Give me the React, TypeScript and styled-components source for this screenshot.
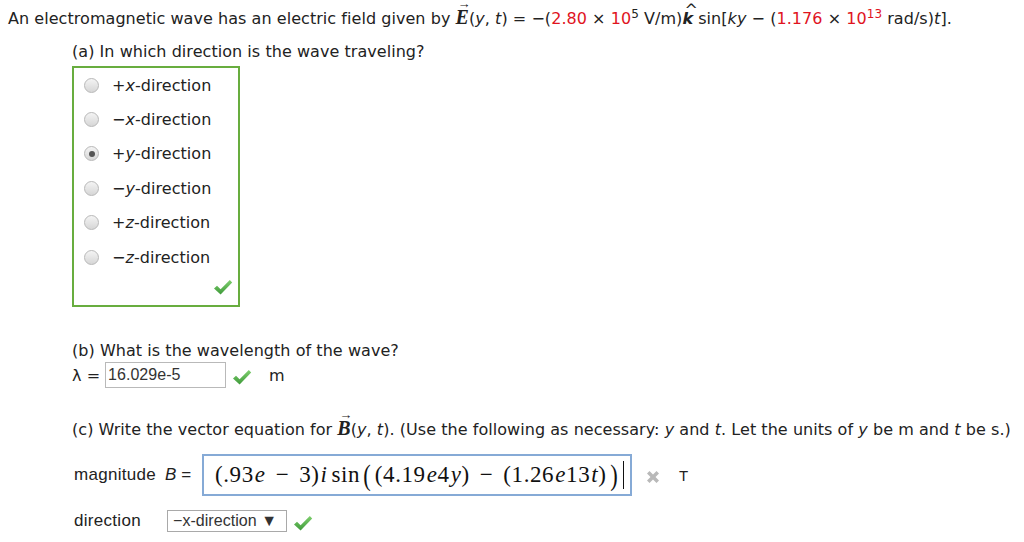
import React from "react";
import styled, { createGlobalStyle } from "styled-components";

const GlobalStyle = createGlobalStyle`
  body {
    margin: 0;
    background: #ffffff;
    color: #222222;
    font-family: "DejaVu Sans", Verdana, sans-serif;
  }
`;

const options = [
  { sign: "+", axis: "x" },
  { sign: "\u2212", axis: "x" },
  { sign: "+", axis: "y", checked: true },
  { sign: "\u2212", axis: "y" },
  { sign: "+", axis: "z" },
  { sign: "\u2212", axis: "z" },
];

const CheckMark = () => (
  <svg width="20" height="17" viewBox="0 0 20 17">
    <defs>
      <linearGradient id="ck" x1="0" y1="0" x2="0" y2="1">
        <stop offset="0" stopColor="#7fcf6e" />
        <stop offset="1" stopColor="#3e9a3a" />
      </linearGradient>
    </defs>
    <path
      d="M1 9.5 L4 6.8 L7.6 10.2 L16.8 1 L19.2 3.4 L7.6 15.6 Z"
      fill="url(#ck)"
    />
  </svg>
);

const CrossMark = () => (
  <svg width="16" height="16" viewBox="0 0 16 16">
    <path
      d="M2 4.5 L4.5 2 L8 5.5 L11.5 2 L14 4.5 L10.5 8 L14 11.5 L11.5 14 L8 10.5 L4.5 14 L2 11.5 L5.5 8 Z"
      fill="#b9b9b9"
    />
  </svg>
);

const App = () => {
  return (
    <>
      <GlobalStyle />
      <Page>
        <Question>
          An electromagnetic wave has an electric field given by{" "}
          <Vec>E</Vec>(<I>y</I>, <I>t</I>) = −(<Red>2.80</Red> × <Red>10</Red>
          <Sup>5</Sup> V/m)<Hat>k</Hat> sin[<I>ky</I> − (<Red>1.176</Red> ×{" "}
          <Red>10</Red>
          <Sup>
            <Red>13</Red>
          </Sup>{" "}
          rad/s)<I>t</I>].
        </Question>

        <Part>
          <PartLabel>(a) In which direction is the wave traveling?</PartLabel>
          <ChoiceBox>
            {options.map((o, i) => (
              <Choice key={i}>
                <Radio checked={!!o.checked} />
                <span>
                  {o.sign}
                  <I>{o.axis}</I>-direction
                </span>
              </Choice>
            ))}
            <BoxCheck>
              <CheckMark />
            </BoxCheck>
          </ChoiceBox>
        </Part>

        <Part $top={34}>
          <PartLabel>(b) What is the wavelength of the wave?</PartLabel>
          <AnswerRow>
            <Symbol>λ =</Symbol>
            <TextField>16.029e-5</TextField>
            <Mark>
              <CheckMark />
            </Mark>
            <Unit>m</Unit>
          </AnswerRow>
        </Part>

        <Part $top={29}>
          <PartLabel>
            (c) Write the vector equation for <Vec>B</Vec>(<I>y</I>, <I>t</I>).
            (Use the following as necessary: <I>y</I> and <I>t</I>. Let the
            units of <I>y</I> be m and <I>t</I> be s.)
          </PartLabel>
          <FormRow>
            <FieldLabel $w={87}>magnitude</FieldLabel>
            <SymbolSans>
              <i>B</i> =
            </SymbolSans>
            <MathBox>
              (.93<MI>e</MI>
              <Op>−</Op>3)<MI>i</MI>
              <Fn>sin</Fn>
              <Big>(</Big>(4.19<MI>e</MI>4<MI>y</MI>)<Op>−</Op>(1.26<MI>e</MI>13
              <MI>t</MI>)<Big>)</Big>
              <Caret />
            </MathBox>
            <CrossWrap>
              <CrossMark />
            </CrossWrap>
            <UnitSans>T</UnitSans>
          </FormRow>
          <DirectionRow>
            <FieldLabel $w={93}>direction</FieldLabel>
            <Select>−x-direction ▼</Select>
            <Mark>
              <CheckMark />
            </Mark>
          </DirectionRow>
        </Part>
      </Page>
    </>
  );
};

const Page = styled.div`
  padding: 6px 0 0 8px;
  font-size: 16px;
  letter-spacing: 0.05px;
`;

const Question = styled.div`
  line-height: 22px;
  white-space: nowrap;
`;

const I = styled.i`
  font-style: italic;
`;

const Red = styled.span`
  color: #e0141e;
`;

const Sup = styled.sup`
  font-size: 12px;
  vertical-align: 6px;
  line-height: 0;
`;

const Vec = styled.span`
  position: relative;
  display: inline-block;
  font-family: "Liberation Serif", serif;
  font-style: italic;
  font-weight: bold;
  font-size: 20px;
  &::before {
    content: "→";
    position: absolute;
    left: 2px;
    top: -13px;
    font-size: 13px;
    font-style: normal;
    font-weight: normal;
  }
`;

const Hat = styled.span`
  position: relative;
  display: inline-block;
  font-style: italic;
  font-weight: bold;
  &::before {
    content: "^";
    position: absolute;
    left: 2px;
    top: -9px;
    font-style: normal;
    font-weight: normal;
  }
`;

const Part = styled.div<{ $top?: number }>`
  margin: ${(p) => p.$top ?? 12}px 0 0 64px;
`;

const PartLabel = styled.div`
  line-height: 20px;
  white-space: nowrap;
`;

const ChoiceBox = styled.div`
  position: relative;
  box-sizing: border-box;
  width: 168px;
  height: 241px;
  margin-top: 4px;
  padding: 0 0 0 10px;
  border: 2px solid #68ad3f;
`;

const Choice = styled.div`
  display: flex;
  align-items: center;
  gap: 13px;
  height: 34.4px;
`;

const Radio = styled.span<{ checked: boolean }>`
  position: relative;
  box-sizing: border-box;
  width: 15px;
  height: 15px;
  border-radius: 50%;
  border: 1px solid #b8b8b8;
  background: linear-gradient(#f4f4f4, #d6d6d6);
  &::after {
    content: "";
    display: ${(p) => (p.checked ? "block" : "none")};
    position: absolute;
    left: 3.5px;
    top: 3.5px;
    width: 6px;
    height: 6px;
    border-radius: 50%;
    background: #555555;
  }
`;

const BoxCheck = styled.div`
  position: absolute;
  right: 5px;
  bottom: 5px;
`;

const AnswerRow = styled.div`
  display: flex;
  align-items: center;
  height: 28px;
`;

const Symbol = styled.span`
  flex: none;
  width: 33px;
  white-space: nowrap;
`;

const TextField = styled.div`
  box-sizing: border-box;
  width: 121px;
  height: 26px;
  padding: 3px 2px 0;
  border: 1px solid #b9b9b9;
  font-family: "Liberation Sans", Arial, sans-serif;
  font-size: 16px;
  color: #333333;
`;

const Mark = styled.span`
  display: inline-flex;
  margin-left: 6px;
  padding-top: 4px;
`;

const Unit = styled.span`
  margin-left: 17px;
`;

const FormRow = styled.div`
  display: flex;
  align-items: center;
  margin-top: 14px;
  margin-left: 2px;
  font-family: "Liberation Sans", Arial, sans-serif;
  font-size: 16px;
`;

const FieldLabel = styled.span<{ $w: number }>`
  font-family: "Liberation Sans", Arial, sans-serif;
  font-size: 17px;
  letter-spacing: 0.3px;
  width: ${(p) => p.$w}px;
`;

const SymbolSans = styled.span`
  box-sizing: border-box;
  width: 41px;
  padding-left: 4px;
  font-size: 17px;
  white-space: nowrap;
`;

const MathBox = styled.div`
  display: flex;
  align-items: center;
  box-sizing: border-box;
  width: 430px;
  height: 42px;
  padding: 0 0 0 11px;
  border: 2px solid #86aad6;
  font-family: "Liberation Serif", "DejaVu Serif", serif;
  font-size: 23px;
  letter-spacing: 0.6px;
  white-space: pre;
  color: #111111;
`;

const MI = styled.i`
  font-style: italic;
  margin-left: 1px;
`;

const Op = styled.span`
  margin: 0 10px;
`;

const Fn = styled.span`
  margin-left: 4px;
`;

const Big = styled.span`
  font-size: 30px;
  line-height: 1;
  display: inline-block;
  transform: scaleX(0.75);
  margin: 0 2px;
`;

const Caret = styled.span`
  display: inline-block;
  width: 1px;
  height: 28px;
  margin-left: 2px;
  background: #111111;
`;

const CrossWrap = styled.span`
  display: inline-flex;
  margin-left: 13px;
  padding-top: 3px;
`;

const UnitSans = styled.span`
  margin-left: 18px;
  font-size: 15px;
`;

const DirectionRow = styled.div`
  display: flex;
  align-items: center;
  margin-top: 14px;
  margin-left: 2px;
`;

const Select = styled.div`
  box-sizing: border-box;
  width: 120px;
  height: 22px;
  padding: 1px 0 0 5px;
  border: 1px solid #a9a9a9;
  font-family: "Liberation Sans", Arial, sans-serif;
  font-size: 16px;
  color: #333333;
  white-space: nowrap;
`;

export default App;
